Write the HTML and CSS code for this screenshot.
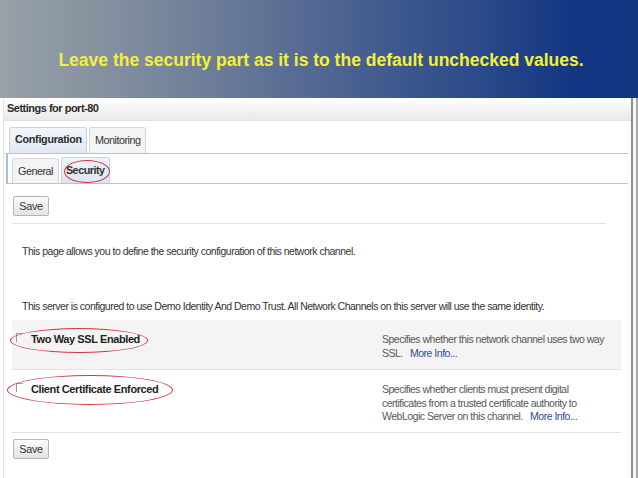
FILE: index.html
```html
<!DOCTYPE html>
<html>
<head>
<meta charset="utf-8">
<link rel="stylesheet" href="styles.css">
</head>
<body>
<div class="slide-header"><p class="headline">Leave the security part as it is to the default unchecked values.</p></div>
<div class="frame">
  <div class="content">
    <div class="title-bar">Settings for port-80</div>
    <div class="tabs">
      <div class="tab tab-active">Configuration</div>
      <div class="tab">Monitoring</div>
    </div>
    <div class="subtabs">
      <div class="subtab">General</div>
      <div class="subtab subtab-active">Security<span class="ring ring-tab"></span></div>
    </div>
    <div class="body">
      <div class="bar"><button class="btn">Save</button></div>
      <p class="intro">This page allows you to define the security configuration of this network channel.</p>
      <p class="intro intro-2">This server is configured to use Demo Identity And Demo Trust. All Network Channels on this server will use the same identity.</p>
      <div class="row row-shaded">
        <div class="label"><span class="check"></span><span class="label-text">Two Way SSL Enabled</span><span class="ring ring-ssl"></span></div>
        <div class="desc"><span>Specifies whether this network channel uses two way SSL.</span> &nbsp; <a class="more">More Info...</a></div>
      </div>
      <div class="row row-tall">
        <div class="label"><span class="check"></span><span class="label-text">Client Certificate Enforced</span><span class="ring ring-cert"></span></div>
        <div class="desc"><span>Specifies whether clients must present digital certificates from a trusted certificate authority to WebLogic Server on this channel.</span> &nbsp; <a class="more">More Info...</a></div>
      </div>
      <div class="bar bar-bottom"><button class="btn">Save</button></div>
    </div>
  </div>
  <div class="scrollbar"></div>
</div>
</body>
</html>
```
FILE: styles.css
```css
* { box-sizing: border-box; }
html, body { margin: 0; padding: 0; }
body {
  width: 638px;
  height: 478px;
  overflow: hidden;
  background: #fff;
  font-family: "Liberation Sans", Arial, sans-serif;
}
.slide-header {
  height: 98px;
  background: linear-gradient(to right, #98a1a8 0%, #8792a0 15%, #6a7b97 35%, #4a6191 55%, #2a4a88 75%, #133682 90%, #123580 100%);
  display: flex;
  justify-content: center;
  align-items: flex-end;
  padding-bottom: 28px;
}
.headline {
  margin: 0;
  color: #f3f03c;
  font-weight: bold;
  font-size: 17.5px;
  line-height: 20px;
  padding-left: 4px;
}
.frame {
  display: flex;
  height: 380px;
  margin-left: 3px;
  border-left: 1px solid #e4e4e4;
}
.content {
  flex: 1;
  font-size: 10.5px;
  letter-spacing: -0.5px;
  color: #333;
}
.scrollbar {
  width: 7px;
  border-left: 2px solid #8e8e8e;
  border-right: 2px solid #a9a9a9;
  background: #f4f4f4;
}
.title-bar {
  height: 23px;
  padding: 4px 0 0 3px;
  font-weight: bold;
  font-size: 11px;
  color: #2b2b2b;
  background: linear-gradient(#ffffff, #f2f2f2 60%, #e9e9e9);
  border-bottom: 1px solid #e2e2e2;
}
.tabs {
  display: flex;
  gap: 2px;
  padding: 6px 0 0 5px;
  margin-right: 3px;
  border-bottom: 1px solid #b6c4d4;
}
.tab {
  height: 26px;
  padding: 6px 5px 0 5px;
  border: 1px solid #d6d6d6;
  border-bottom: none;
  border-radius: 3px 3px 0 0;
  background: #f4f4f4;
  font-size: 10.8px;
  color: #333;
}
.tab-active {
  width: 78px;
  background: linear-gradient(#f2f6fb, #dfe8f3);
  border-color: #c7d3e2;
  font-weight: bold;
  color: #2b2b2b;
  padding-top: 5px;
  letter-spacing: -0.3px;
}
.subtabs {
  display: flex;
  gap: 2px;
  height: 30px;
  padding: 4px 0 0 4px;
  margin-left: 2px;
  margin-right: 3px;
  border-left: 2px solid #a9bfd9;
  border-bottom: 1px solid #b6c4d4;
}
.subtab {
  position: relative;
  height: 25px;
  padding: 6px 5px 0 5px;
  border: 1px solid #d6d6d6;
  border-bottom: none;
  border-radius: 3px 3px 0 0;
  background: #f4f4f4;
  font-size: 10.8px;
}
.subtab-active {
  margin-top: -1px;
  height: 26px;
  background: linear-gradient(#eef3f9, #dce6f2);
  border-color: #c7d3e2;
  font-weight: bold;
  padding-left: 4px;
  padding-right: 4px;
}
.ring {
  position: absolute;
  border: 1.3px solid #d8343a;
  border-radius: 50%;
  pointer-events: none;
}
.ring-tab { left: 2px; top: 2px; width: 46px; height: 23px; }
.body {
  padding: 0 10px 0 8px;
}
.bar {
  padding: 12px 0 7px 1px;
  margin-right: 15px;
  border-bottom: 1px solid #e4e4e4;
}
.bar-bottom { border-bottom: none; padding-top: 6px; }
.btn {
  height: 20px;
  width: 36px;
  padding: 0;
  font-family: "Liberation Sans", Arial, sans-serif;
  font-size: 10.8px;
  letter-spacing: -0.3px;
  color: #333;
  border: 1px solid #b5b5b5;
  border-radius: 2px;
  background: linear-gradient(#fbfbfb, #e3e3e3);
}
.intro {
  margin: 21px 0 0 10px;
  line-height: 13px;
}
.intro-2 { margin-top: 42px; margin-bottom: 7px; }
.row {
  display: flex;
  border-bottom: 1px solid #e2e2e2;
  padding: 13px 0 8px 0;
  line-height: 13px;
}
.row-shaded {
  background: #f4f4f4;
  height: 50px;
}
.row-tall { height: 63px; }
.label {
  position: relative;
  width: 370px;
  padding-left: 4px;
  display: flex;
  align-items: flex-start;
  font-weight: bold;
  font-size: 11px;
  letter-spacing: -0.4px;
  color: #1e1e1e;
}
.check {
  width: 7px;
  height: 9px;
  margin: 0 8px 0 0;
  border-top: 1px solid #999;
  border-left: 1px solid #999;
}
.ring-ssl { left: -2px; top: -5px; width: 138px; height: 25px; }
.ring-cert { left: -5px; top: -8px; width: 166px; height: 30px; }
.desc {
  width: 228px;
  color: #585858;
  line-height: 13.5px;
}
.more { color: #2a4a9e; }
```
